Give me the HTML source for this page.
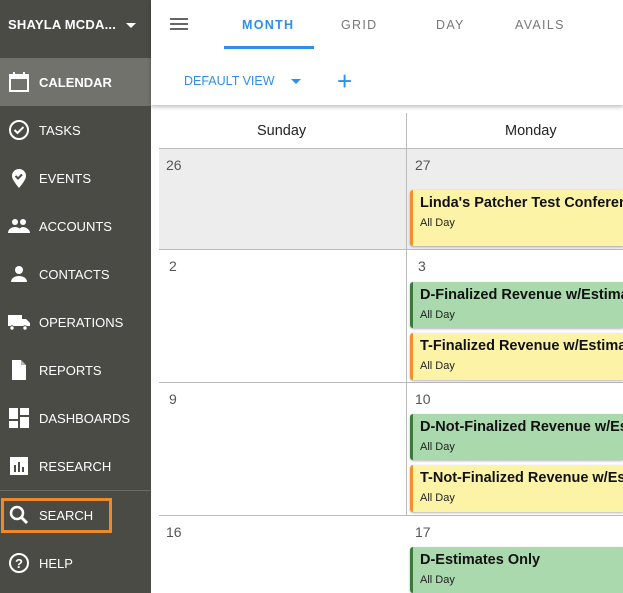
<!DOCTYPE html>
<html><head><style>
*{margin:0;padding:0;box-sizing:border-box}
html,body{width:623px;height:593px;overflow:hidden}
body{font-family:"Liberation Sans",sans-serif;background:#fff;position:relative}
#sb{position:absolute;left:0;top:0;width:151px;height:593px;background:#4b4b45;color:#fff}
.user{position:absolute;left:8px;top:17px;font-size:13px;font-weight:bold;letter-spacing:.2px}
.item{position:absolute;left:0;width:151px;height:48px;font-size:13px;display:flex;align-items:center}
.item svg{position:absolute;left:8px;width:22px;height:22px}
.item span{position:absolute;left:39px}
.act{background:#72726c;font-weight:bold}
#main{position:absolute;left:151px;top:0;width:472px;height:105px;background:#fff;box-shadow:0 2px 4px rgba(0,0,0,.25);z-index:2}
.tab{position:absolute;top:18px;font-size:12.5px;letter-spacing:1.3px;color:#777}
#cal{position:absolute;left:159px;top:113px;width:464px;height:480px;background:#fff;overflow:hidden}
.cell{position:absolute;border-right:1px solid #bbb;border-bottom:1px solid #bbb}
.num{position:absolute;font-size:14px;color:#555}
.ev{position:absolute;left:410px;width:213px;border-radius:3px 0 0 3px;padding:5px 0 0 7px;box-shadow:0 1px 2px rgba(0,0,0,.3);white-space:nowrap;overflow:hidden}
.ev b{display:block;font-size:14.5px;color:#111}
.ev i{display:block;font-style:normal;font-size:11px;color:#222;margin-top:6px}
.y{background:#fdf3a7;border-left:3px solid #f0922b}
.g{background:#a9d9ac;border-left:3px solid #3a7a3d}
</style></head><body>
<div id="sb">
<div class="user">SHAYLA MCDA... <span style="display:inline-block;width:0;height:0;border-left:5px solid transparent;border-right:5px solid transparent;border-top:5px solid #fff;margin-left:6px;vertical-align:middle"></span></div>
<div class="item act" style="top:58px"><svg viewBox="0 0 22 22"><rect x="2" y="4" width="18" height="16" fill="none" stroke="#fff" stroke-width="2"/><rect x="2" y="4" width="18" height="4" fill="#fff"/><rect x="5" y="1" width="2" height="4" fill="#fff"/><rect x="15" y="1" width="2" height="4" fill="#fff"/></svg><span>CALENDAR</span></div>
<div class="item" style="top:106px"><svg viewBox="0 0 22 22"><circle cx="11" cy="11" r="9" fill="none" stroke="#fff" stroke-width="2"/><path d="M6.5 11l3 3 6-6" fill="none" stroke="#fff" stroke-width="2"/></svg><span>TASKS</span></div>
<div class="item" style="top:154px"><svg viewBox="0 0 22 22"><path d="M11 21C7 16 4 12 4 9a7 7 0 0114 0c0 3-3 7-7 12z" fill="#fff"/><path d="M7.5 9l2.5 2.5 4-4" fill="none" stroke="#4b4b45" stroke-width="2"/></svg><span>EVENTS</span></div>
<div class="item" style="top:202px"><svg viewBox="0 0 22 22"><circle cx="7" cy="7" r="3" fill="#fff"/><circle cx="15" cy="7" r="3" fill="#fff"/><path d="M0 18c0-4 4-6 7-6s7 2 7 6zM10 18c0-4 3-6 5-6s7 2 7 6z" fill="#fff"/></svg><span>ACCOUNTS</span></div>
<div class="item" style="top:250px"><svg viewBox="0 0 22 22"><circle cx="11" cy="7" r="4" fill="#fff"/><path d="M3 19c0-4 4-6 8-6s8 2 8 6z" fill="#fff"/></svg><span>CONTACTS</span></div>
<div class="item" style="top:298px"><svg viewBox="0 0 22 22"><rect x="0" y="4" width="14" height="11" fill="#fff"/><path d="M14 8h4l4 4v3h-8z" fill="#fff"/><circle cx="4" cy="17" r="2.2" fill="#fff" stroke="#4b4b45"/><circle cx="17" cy="17" r="2.2" fill="#fff" stroke="#4b4b45"/></svg><span>OPERATIONS</span></div>
<div class="item" style="top:346px"><svg viewBox="0 0 22 22"><path d="M4 1h9l5 5v15H4z" fill="#fff"/><path d="M13 1v5h5" fill="#4b4b45" opacity=".4"/></svg><span>REPORTS</span></div>
<div class="item" style="top:394px"><svg viewBox="0 0 22 22"><rect x="1" y="1" width="9" height="11" fill="#fff"/><rect x="1" y="14" width="9" height="7" fill="#fff"/><rect x="12" y="1" width="9" height="7" fill="#fff"/><rect x="12" y="10" width="9" height="11" fill="#fff"/></svg><span>DASHBOARDS</span></div>
<div class="item" style="top:442px"><svg viewBox="0 0 22 22"><rect x="2" y="2" width="18" height="18" fill="#fff"/><rect x="6" y="10" width="2" height="7" fill="#4b4b45"/><rect x="10" y="7" width="2" height="10" fill="#4b4b45"/><rect x="14" y="12" width="2" height="5" fill="#4b4b45"/></svg><span>RESEARCH</span></div>
<div style="position:absolute;left:0;top:490px;width:151px;height:1px;background:#6a6a64"></div>
<div style="position:absolute;left:1px;top:498px;width:111px;height:35px;border:3px solid #f08a24"></div>
<div class="item" style="top:491px"><svg viewBox="0 0 22 22"><circle cx="9" cy="9" r="6" fill="none" stroke="#fff" stroke-width="2.5"/><path d="M13 13l6 6" stroke="#fff" stroke-width="3"/></svg><span>SEARCH</span></div>
<div class="item" style="top:539px"><svg viewBox="0 0 22 22"><circle cx="11" cy="11" r="9" fill="none" stroke="#fff" stroke-width="2"/><text x="11" y="16" font-size="13" font-weight="bold" fill="#fff" text-anchor="middle" font-family="Liberation Sans">?</text></svg><span>HELP</span></div>
</div>
<div id="main">
<div style="position:absolute;left:19px;top:18px;width:18px;height:2px;background:#666;box-shadow:0 5px 0 #666,0 10px 0 #666"></div>
<div class="tab" style="left:91px;color:#2f8fe8;font-weight:bold">MONTH</div>
<div style="position:absolute;left:73px;top:46px;width:90px;height:3px;background:#2f8fe8"></div>
<div class="tab" style="left:190px">GRID</div>
<div class="tab" style="left:285px">DAY</div>
<div class="tab" style="left:364px">AVAILS</div>
<div style="position:absolute;left:33px;top:74px;font-size:12.5px;color:#2f8fe8">DEFAULT VIEW</div>
<div style="position:absolute;left:140px;top:79px;border-left:5px solid transparent;border-right:5px solid transparent;border-top:5px solid #2f8fe8"></div>
<div style="position:absolute;left:186px;top:72px;font-size:26px;line-height:18px;color:#2f8fe8;font-weight:300">+</div>
</div>
<div id="cal">
<div class="cell" style="left:0;top:0;width:248px;height:36px"></div>
<div class="cell" style="left:248px;top:0;width:230px;height:36px"></div>
<div style="position:absolute;left:98px;top:10px;font-size:14.5px;color:#222">Sunday</div>
<div style="position:absolute;left:346px;top:10px;font-size:14.5px;color:#222">Monday</div>
<div class="cell" style="left:0;top:36px;width:248px;height:101px;background:#ededed"></div>
<div class="cell" style="left:248px;top:36px;width:230px;height:101px;background:#ededed"></div>
<div class="cell" style="left:0;top:137px;width:248px;height:133px"></div>
<div class="cell" style="left:248px;top:137px;width:230px;height:133px"></div>
<div class="cell" style="left:0;top:270px;width:248px;height:133px"></div>
<div class="cell" style="left:248px;top:270px;width:230px;height:133px"></div>
<div class="cell" style="left:248px;top:403px;width:230px;height:100px"></div>
</div>
<div class="num" style="left:166px;top:157px">26</div>
<div class="num" style="left:415px;top:157px">27</div>
<div class="num" style="left:169px;top:258px">2</div>
<div class="num" style="left:418px;top:258px">3</div>
<div class="num" style="left:169px;top:391px">9</div>
<div class="num" style="left:415px;top:391px">10</div>
<div class="num" style="left:166px;top:524px">16</div>
<div class="num" style="left:415px;top:524px">17</div>
<div class="ev y" style="top:190px;height:56px"><b>Linda's Patcher Test Conference</b><i>All Day</i></div>
<div class="ev g" style="top:282px;height:46px"><b>D-Finalized Revenue w/Estimates</b><i>All Day</i></div>
<div class="ev y" style="top:333px;height:47px"><b>T-Finalized Revenue w/Estimates</b><i>All Day</i></div>
<div class="ev g" style="top:414px;height:46px"><b>D-Not-Finalized Revenue w/Est</b><i>All Day</i></div>
<div class="ev y" style="top:465px;height:47px"><b>T-Not-Finalized Revenue w/Est</b><i>All Day</i></div>
<div class="ev g" style="top:547px;height:46px"><b>D-Estimates Only</b><i>All Day</i></div>
</body></html>
